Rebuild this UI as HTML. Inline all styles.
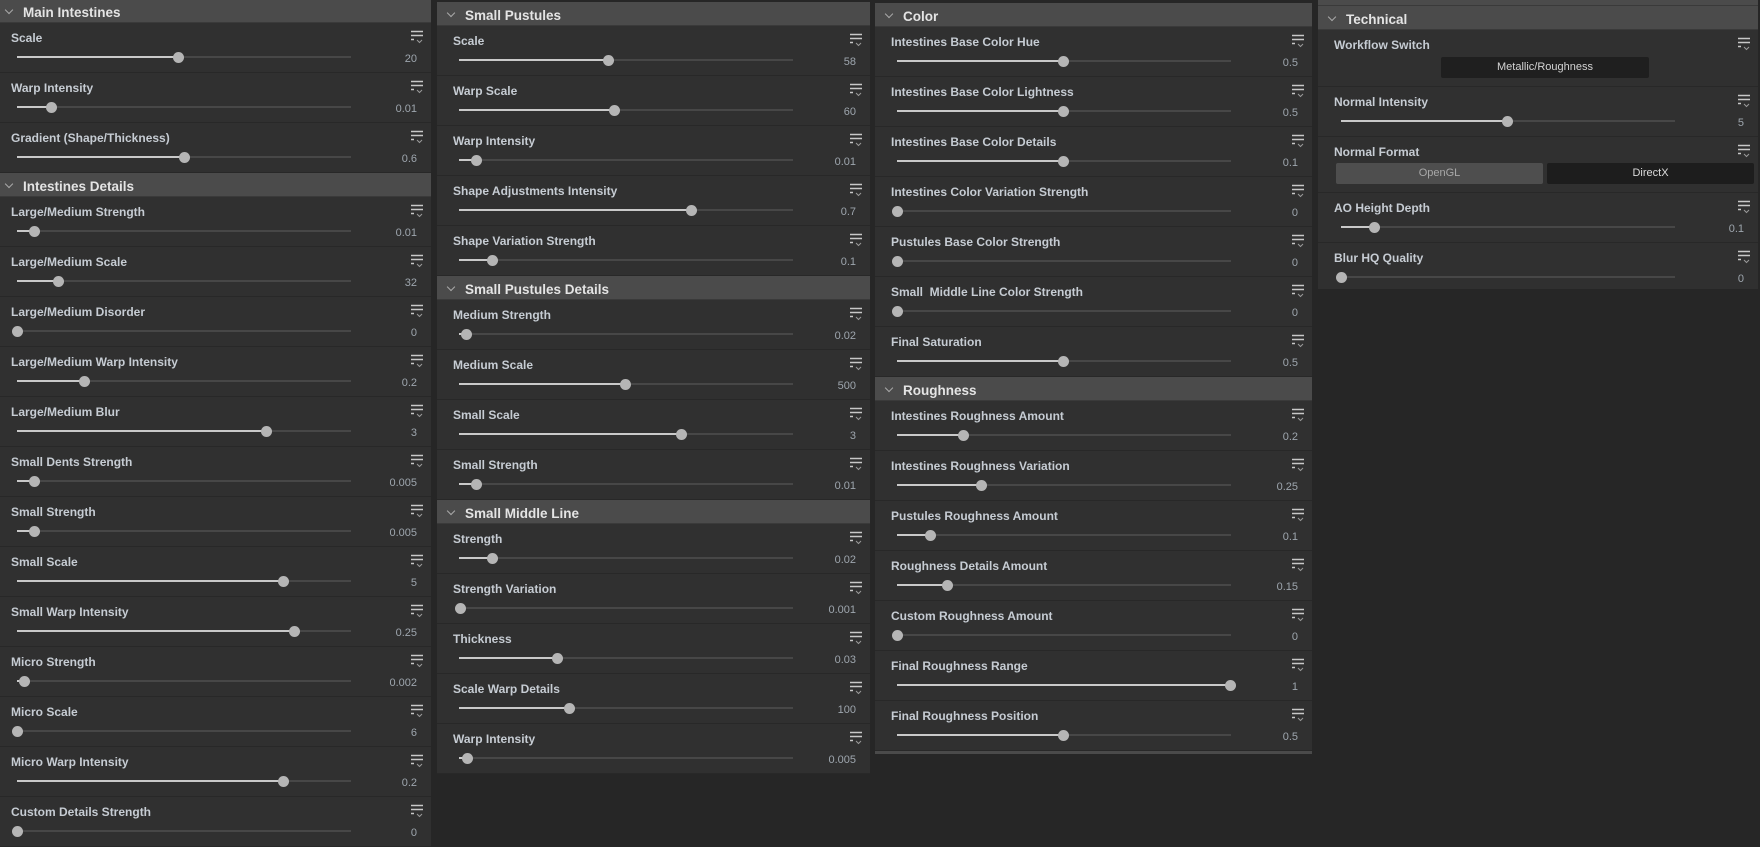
<!DOCTYPE html>
<html><head><meta charset="utf-8"><style>
*{margin:0;padding:0;box-sizing:border-box}
body{width:1760px;height:846px;background:#262626;overflow:hidden;position:relative;font-family:"Liberation Sans",sans-serif}
.col{position:absolute;background:#262626}
.h{height:24px;background:#4b4b4b;border-bottom:1px solid #3a3a3a;position:relative;color:#e4e4e4;font-weight:bold;font-size:13.5px;line-height:27px;padding-left:28px;overflow:hidden}
.h:before{content:"";position:absolute;left:11px;top:8px;width:5px;height:5px;border-right:1px solid #aaa;border-bottom:1px solid #aaa;transform:rotate(45deg)}
.r{height:50px;background:#303030;border-bottom:1px solid #282828;position:relative}
.l{position:absolute;left:16px;top:8px;font-weight:bold;font-size:12px;color:#c6ccd3}
.t{position:absolute;left:22px;width:334px;top:33px;height:2px;background:#474747}
.f{position:absolute;left:22px;top:33px;height:2px;background:#c9c9c9}
.k{position:absolute;top:29px;width:11px;height:11px;margin-left:-5px;border-radius:50%;background:#b5b5b5}
.v{position:absolute;right:14px;top:30px;font-size:11px;color:#9ea6ae}
.i{position:absolute;right:6px;top:7px}
.b{position:absolute;height:21px;font-size:11px;line-height:21px;text-align:center;border-radius:2px}
</style></head><body>
<svg width="0" height="0" style="position:absolute"><defs><g id="ic"><path d="M0 1.5h12M0 5.5h12M0 9.5h3" stroke="#c8c8c8" stroke-width="1.6"/><path d="M6 10l2.5 2.5L11 10" stroke="#9a9a9a" stroke-width="1" fill="none"/></g></defs></svg>

<!-- Column 1 -->
<div class="col" style="left:-5px;top:-1px;width:436px;height:848px">
<div class="h">Main Intestines</div>
<div class="r"><div class="l">Scale</div><div class="t"></div><div class="f" style="width:161px"></div><div class="k" style="left:183px"></div><div class="v">20</div><svg class="i" width="14" height="14"><use href="#ic"/></svg></div>
<div class="r"><div class="l">Warp Intensity</div><div class="t"></div><div class="f" style="width:34px"></div><div class="k" style="left:56px"></div><div class="v">0.01</div><svg class="i" width="14" height="14"><use href="#ic"/></svg></div>
<div class="r"><div class="l">Gradient (Shape/Thickness)</div><div class="t"></div><div class="f" style="width:167px"></div><div class="k" style="left:189px"></div><div class="v">0.6</div><svg class="i" width="14" height="14"><use href="#ic"/></svg></div>
<div class="h">Intestines Details</div>
<div class="r"><div class="l">Large/Medium Strength</div><div class="t"></div><div class="f" style="width:17px"></div><div class="k" style="left:39px"></div><div class="v">0.01</div><svg class="i" width="14" height="14"><use href="#ic"/></svg></div>
<div class="r"><div class="l">Large/Medium Scale</div><div class="t"></div><div class="f" style="width:41px"></div><div class="k" style="left:63px"></div><div class="v">32</div><svg class="i" width="14" height="14"><use href="#ic"/></svg></div>
<div class="r"><div class="l">Large/Medium Disorder</div><div class="t"></div><div class="k" style="left:22px"></div><div class="v">0</div><svg class="i" width="14" height="14"><use href="#ic"/></svg></div>
<div class="r"><div class="l">Large/Medium Warp Intensity</div><div class="t"></div><div class="f" style="width:67px"></div><div class="k" style="left:89px"></div><div class="v">0.2</div><svg class="i" width="14" height="14"><use href="#ic"/></svg></div>
<div class="r"><div class="l">Large/Medium Blur</div><div class="t"></div><div class="f" style="width:249px"></div><div class="k" style="left:271px"></div><div class="v">3</div><svg class="i" width="14" height="14"><use href="#ic"/></svg></div>
<div class="r"><div class="l">Small Dents Strength</div><div class="t"></div><div class="f" style="width:17px"></div><div class="k" style="left:39px"></div><div class="v">0.005</div><svg class="i" width="14" height="14"><use href="#ic"/></svg></div>
<div class="r"><div class="l">Small Strength</div><div class="t"></div><div class="f" style="width:17px"></div><div class="k" style="left:39px"></div><div class="v">0.005</div><svg class="i" width="14" height="14"><use href="#ic"/></svg></div>
<div class="r"><div class="l">Small Scale</div><div class="t"></div><div class="f" style="width:266px"></div><div class="k" style="left:288px"></div><div class="v">5</div><svg class="i" width="14" height="14"><use href="#ic"/></svg></div>
<div class="r"><div class="l">Small Warp Intensity</div><div class="t"></div><div class="f" style="width:277px"></div><div class="k" style="left:299px"></div><div class="v">0.25</div><svg class="i" width="14" height="14"><use href="#ic"/></svg></div>
<div class="r"><div class="l">Micro Strength</div><div class="t"></div><div class="f" style="width:7px"></div><div class="k" style="left:29px"></div><div class="v">0.002</div><svg class="i" width="14" height="14"><use href="#ic"/></svg></div>
<div class="r"><div class="l">Micro Scale</div><div class="t"></div><div class="k" style="left:22px"></div><div class="v">6</div><svg class="i" width="14" height="14"><use href="#ic"/></svg></div>
<div class="r"><div class="l">Micro Warp Intensity</div><div class="t"></div><div class="f" style="width:266px"></div><div class="k" style="left:288px"></div><div class="v">0.2</div><svg class="i" width="14" height="14"><use href="#ic"/></svg></div>
<div class="r"><div class="l">Custom Details Strength</div><div class="t"></div><div class="k" style="left:22px"></div><div class="v">0</div><svg class="i" width="14" height="14"><use href="#ic"/></svg></div>
</div>

<!-- Column 2 -->
<div class="col" style="left:437px;top:2px;width:433px">
<div class="h">Small Pustules</div>
<div class="r"><div class="l">Scale</div><div class="t"></div><div class="f" style="width:149px"></div><div class="k" style="left:171px"></div><div class="v">58</div><svg class="i" width="14" height="14"><use href="#ic"/></svg></div>
<div class="r"><div class="l">Warp Scale</div><div class="t"></div><div class="f" style="width:155px"></div><div class="k" style="left:177px"></div><div class="v">60</div><svg class="i" width="14" height="14"><use href="#ic"/></svg></div>
<div class="r"><div class="l">Warp Intensity</div><div class="t"></div><div class="f" style="width:17px"></div><div class="k" style="left:39px"></div><div class="v">0.01</div><svg class="i" width="14" height="14"><use href="#ic"/></svg></div>
<div class="r"><div class="l">Shape Adjustments Intensity</div><div class="t"></div><div class="f" style="width:232px"></div><div class="k" style="left:254px"></div><div class="v">0.7</div><svg class="i" width="14" height="14"><use href="#ic"/></svg></div>
<div class="r"><div class="l">Shape Variation Strength</div><div class="t"></div><div class="f" style="width:33px"></div><div class="k" style="left:55px"></div><div class="v">0.1</div><svg class="i" width="14" height="14"><use href="#ic"/></svg></div>
<div class="h">Small Pustules Details</div>
<div class="r"><div class="l">Medium Strength</div><div class="t"></div><div class="f" style="width:7px"></div><div class="k" style="left:29px"></div><div class="v">0.02</div><svg class="i" width="14" height="14"><use href="#ic"/></svg></div>
<div class="r"><div class="l">Medium Scale</div><div class="t"></div><div class="f" style="width:166px"></div><div class="k" style="left:188px"></div><div class="v">500</div><svg class="i" width="14" height="14"><use href="#ic"/></svg></div>
<div class="r"><div class="l">Small Scale</div><div class="t"></div><div class="f" style="width:222px"></div><div class="k" style="left:244px"></div><div class="v">3</div><svg class="i" width="14" height="14"><use href="#ic"/></svg></div>
<div class="r"><div class="l">Small Strength</div><div class="t"></div><div class="f" style="width:17px"></div><div class="k" style="left:39px"></div><div class="v">0.01</div><svg class="i" width="14" height="14"><use href="#ic"/></svg></div>
<div class="h">Small Middle Line</div>
<div class="r"><div class="l">Strength</div><div class="t"></div><div class="f" style="width:33px"></div><div class="k" style="left:55px"></div><div class="v">0.02</div><svg class="i" width="14" height="14"><use href="#ic"/></svg></div>
<div class="r"><div class="l">Strength Variation</div><div class="t"></div><div class="k" style="left:23px"></div><div class="v">0.001</div><svg class="i" width="14" height="14"><use href="#ic"/></svg></div>
<div class="r"><div class="l">Thickness</div><div class="t"></div><div class="f" style="width:98px"></div><div class="k" style="left:120px"></div><div class="v">0.03</div><svg class="i" width="14" height="14"><use href="#ic"/></svg></div>
<div class="r"><div class="l">Scale Warp Details</div><div class="t"></div><div class="f" style="width:110px"></div><div class="k" style="left:132px"></div><div class="v">100</div><svg class="i" width="14" height="14"><use href="#ic"/></svg></div>
<div class="r"><div class="l">Warp Intensity</div><div class="t"></div><div class="f" style="width:8px"></div><div class="k" style="left:30px"></div><div class="v">0.005</div><svg class="i" width="14" height="14"><use href="#ic"/></svg></div>
</div>

<!-- Column 3 -->
<div class="col" style="left:875px;top:3px;width:437px">
<div class="h">Color</div>
<div class="r"><div class="l">Intestines Base Color Hue</div><div class="t"></div><div class="f" style="width:166px"></div><div class="k" style="left:188px"></div><div class="v">0.5</div><svg class="i" width="14" height="14"><use href="#ic"/></svg></div>
<div class="r"><div class="l">Intestines Base Color Lightness</div><div class="t"></div><div class="f" style="width:166px"></div><div class="k" style="left:188px"></div><div class="v">0.5</div><svg class="i" width="14" height="14"><use href="#ic"/></svg></div>
<div class="r"><div class="l">Intestines Base Color Details</div><div class="t"></div><div class="f" style="width:166px"></div><div class="k" style="left:188px"></div><div class="v">0.1</div><svg class="i" width="14" height="14"><use href="#ic"/></svg></div>
<div class="r"><div class="l">Intestines Color Variation Strength</div><div class="t"></div><div class="k" style="left:22px"></div><div class="v">0</div><svg class="i" width="14" height="14"><use href="#ic"/></svg></div>
<div class="r"><div class="l">Pustules Base Color Strength</div><div class="t"></div><div class="k" style="left:22px"></div><div class="v">0</div><svg class="i" width="14" height="14"><use href="#ic"/></svg></div>
<div class="r"><div class="l">Small&nbsp; Middle Line Color Strength</div><div class="t"></div><div class="k" style="left:22px"></div><div class="v">0</div><svg class="i" width="14" height="14"><use href="#ic"/></svg></div>
<div class="r"><div class="l">Final Saturation</div><div class="t"></div><div class="f" style="width:166px"></div><div class="k" style="left:188px"></div><div class="v">0.5</div><svg class="i" width="14" height="14"><use href="#ic"/></svg></div>
<div class="h">Roughness</div>
<div class="r"><div class="l">Intestines Roughness Amount</div><div class="t"></div><div class="f" style="width:66px"></div><div class="k" style="left:88px"></div><div class="v">0.2</div><svg class="i" width="14" height="14"><use href="#ic"/></svg></div>
<div class="r"><div class="l">Intestines Roughness Variation</div><div class="t"></div><div class="f" style="width:84px"></div><div class="k" style="left:106px"></div><div class="v">0.25</div><svg class="i" width="14" height="14"><use href="#ic"/></svg></div>
<div class="r"><div class="l">Pustules Roughness Amount</div><div class="t"></div><div class="f" style="width:33px"></div><div class="k" style="left:55px"></div><div class="v">0.1</div><svg class="i" width="14" height="14"><use href="#ic"/></svg></div>
<div class="r"><div class="l">Roughness Details Amount</div><div class="t"></div><div class="f" style="width:50px"></div><div class="k" style="left:72px"></div><div class="v">0.15</div><svg class="i" width="14" height="14"><use href="#ic"/></svg></div>
<div class="r"><div class="l">Custom Roughness Amount</div><div class="t"></div><div class="k" style="left:22px"></div><div class="v">0</div><svg class="i" width="14" height="14"><use href="#ic"/></svg></div>
<div class="r"><div class="l">Final Roughness Range</div><div class="t"></div><div class="f" style="width:333px"></div><div class="k" style="left:355px"></div><div class="v">1</div><svg class="i" width="14" height="14"><use href="#ic"/></svg></div>
<div class="r"><div class="l">Final Roughness Position</div><div class="t"></div><div class="f" style="width:166px"></div><div class="k" style="left:188px"></div><div class="v">0.5</div><svg class="i" width="14" height="14"><use href="#ic"/></svg></div>
<div style="height:3px;background:#4a4a4a"></div>
</div>

<!-- Column 4 -->
<div class="col" style="left:1318px;top:0;width:440px">
<div style="height:6px;background:#4b4b4b;border-bottom:1px solid #3a3a3a"></div>
<div class="h">Technical</div>
<div class="r" style="height:57px"><div class="l">Workflow Switch</div><div class="b" style="left:123px;width:208px;top:27px;background:#1f1f1f;color:#d4d4d4">Metallic/Roughness</div><svg class="i" width="14" height="14"><use href="#ic"/></svg></div>
<div class="r"><div class="l">Normal Intensity</div><div class="t" style="left:23px"></div><div class="f" style="left:23px;width:166px"></div><div class="k" style="left:189px"></div><div class="v">5</div><svg class="i" width="14" height="14"><use href="#ic"/></svg></div>
<div class="r" style="height:56px"><div class="l">Normal Format</div><div class="b" style="left:18px;width:207px;top:26px;background:#4e4e4e;color:#a8a8a8">OpenGL</div><div class="b" style="left:229px;width:207px;top:26px;background:#1d1d1d;color:#dcdcdc">DirectX</div><svg class="i" width="14" height="14"><use href="#ic"/></svg></div>
<div class="r"><div class="l">AO Height Depth</div><div class="t" style="left:23px"></div><div class="f" style="left:23px;width:33px"></div><div class="k" style="left:56px"></div><div class="v">0.1</div><svg class="i" width="14" height="14"><use href="#ic"/></svg></div>
<div class="r" style="height:46px;border:0"><div class="l">Blur HQ Quality</div><div class="t" style="left:23px"></div><div class="k" style="left:23px"></div><div class="v">0</div><svg class="i" width="14" height="14"><use href="#ic"/></svg></div>
</div>
</body></html>
